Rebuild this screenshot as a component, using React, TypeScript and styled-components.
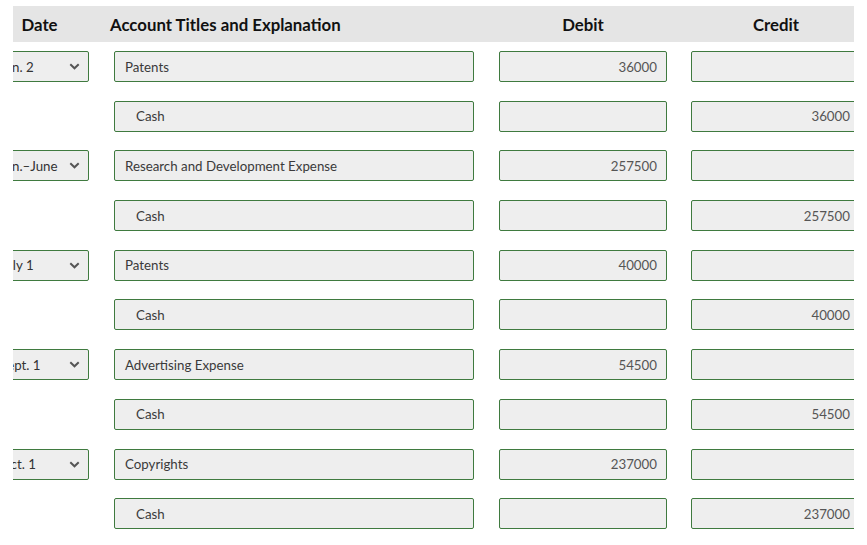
import React from 'react';
import styled, { createGlobalStyle } from 'styled-components';

interface Line {
  date?: string;
  account: string;
  indent?: boolean;
  debit?: string;
  credit?: string;
}

const lines: Line[] = [
  { date: 'Jan. 2', account: 'Patents', debit: '36000' },
  { account: 'Cash', indent: true, credit: '36000' },
  { date: 'Jan.–June', account: 'Research and Development Expense', debit: '257500' },
  { account: 'Cash', indent: true, credit: '257500' },
  { date: 'July 1', account: 'Patents', debit: '40000' },
  { account: 'Cash', indent: true, credit: '40000' },
  { date: 'Sept. 1', account: 'Advertising Expense', debit: '54500' },
  { account: 'Cash', indent: true, credit: '54500' },
  { date: 'Oct. 1', account: 'Copyrights', debit: '237000' },
  { account: 'Cash', indent: true, credit: '237000' },
];

const Chevron = () => (
  <svg width="11" height="7" viewBox="0 0 11 7">
    <path d="M1.3 1.3 L5.5 5.3 L9.7 1.3" fill="none" stroke="#555" strokeWidth="2" />
  </svg>
);

export default function App() {
  return (
    <>
      <GlobalStyle />
      <Frame>
        <Sheet>
          <HeaderRow>
            <HeadCell $align="center">Date</HeadCell>
            <HeadCell $align="left">Account Titles and Explanation</HeadCell>
            <HeadCell $align="center">Debit</HeadCell>
            <HeadCell $align="center">Credit</HeadCell>
          </HeaderRow>
          <Body>
            {lines.map((line, i) => (
              <EntryRow key={i}>
                {line.date ? (
                  <DateSelect>
                    <span>{line.date}</span>
                    <Chevron />
                  </DateSelect>
                ) : (
                  <span />
                )}
                <Field $indent={line.indent}>{line.account}</Field>
                <Field $numeric>{line.debit}</Field>
                <Field $numeric>{line.credit}</Field>
              </EntryRow>
            ))}
          </Body>
        </Sheet>
      </Frame>
    </>
  );
}

const GlobalStyle = createGlobalStyle`
  html, body {
    margin: 0;
    padding: 0;
    background: #ffffff;
    font-family: Lato, "Open Sans", sans-serif;
  }
`;

const Frame = styled.div`
  margin: 6px 0 0 13px;
  width: 841px;
  overflow: hidden;
`;

const Sheet = styled.div`
  margin-left: -23px;
  width: 900px;
`;

const columns = '99px 360px 168px 168px';

const HeaderRow = styled.div`
  display: grid;
  grid-template-columns: ${columns};
  column-gap: 25px;
  height: 36px;
  align-items: center;
  background: #e5e5e5;
`;

const HeadCell = styled.div<{ $align: 'left' | 'center' }>`
  font-size: 16.8px;
  font-weight: 700;
  color: #111;
  text-align: ${(p) => p.$align};
  margin-left: ${(p) => (p.$align === 'left' ? '-4px' : '0')};
`;

const Body = styled.div`
  display: flex;
  flex-direction: column;
  gap: 18.7px;
  padding-top: 9px;
`;

const EntryRow = styled.div`
  display: grid;
  grid-template-columns: ${columns};
  column-gap: 25px;
  height: 31px;

  & > :last-child {
    margin-left: -1px;
  }
`;

const DateSelect = styled.div`
  display: flex;
  align-items: center;
  justify-content: space-between;
  box-sizing: border-box;
  height: 31px;
  padding: 0 8px 0 9px;
  background: #eeeeee;
  border: 1px solid #3f7a3f;
  border-radius: 2px;
  font-size: 13.3px;
  color: #333;
`;

const Field = styled.div<{ $indent?: boolean; $numeric?: boolean }>`
  display: flex;
  align-items: center;
  justify-content: ${(p) => (p.$numeric ? 'flex-end' : 'flex-start')};
  box-sizing: border-box;
  height: 31px;
  padding: 0 9px 0 ${(p) => (p.$indent ? '21px' : '10px')};
  background: #eeeeee;
  border: 1px solid #3f7a3f;
  border-radius: 2px;
  font-size: 13.3px;
  color: ${(p) => (p.$numeric ? '#555' : '#3a3a3a')};
`;
